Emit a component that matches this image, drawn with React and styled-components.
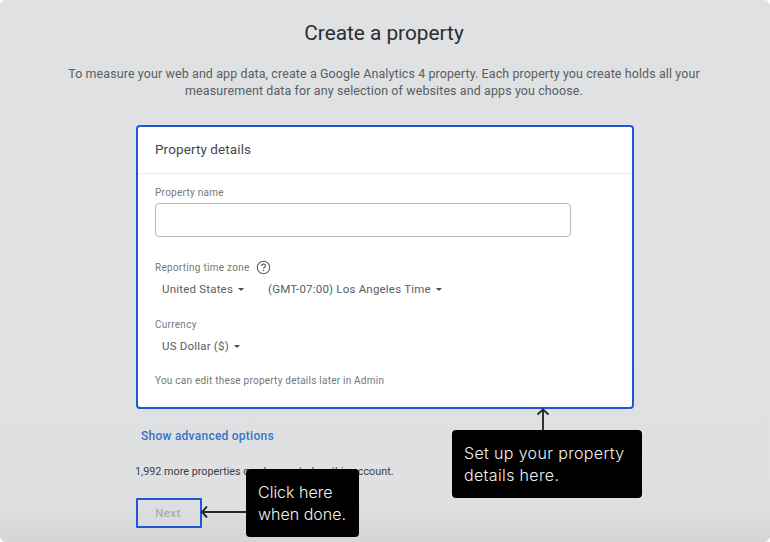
import React from "react";
import styled, { createGlobalStyle } from "styled-components";

const GlobalStyle = createGlobalStyle`
  html, body {
    margin: 0;
    padding: 0;
    background: #fff;
  }
  * {
    box-sizing: border-box;
  }
`;

const Page = styled.div`
  position: relative;
  width: 770px;
  height: 542px;
  overflow: hidden;
  border-radius: 6px;
  background: linear-gradient(to bottom, #dfe1e3 0, #dee0e2 500px, #d4d5d6 542px);
  font-family: Roboto, "Liberation Sans", sans-serif;
  padding-top: 20px;
  display: flex;
  flex-direction: column;
  align-items: center;
`;

const Title = styled.h1`
  margin: 1px 2px 0 0;
  font-size: 20.8px;
  line-height: 25px;
  font-weight: 400;
  color: #2b2d30;
`;

const Intro = styled.p`
  margin: 19px 2px 0 0;
  width: 650px;
  text-align: center;
  font-size: 12.45px;
  line-height: 17px;
  letter-spacing: 0.12px;
  color: #5a5d61;
`;

const Column = styled.div`
  width: 498px;
  margin-top: 26px;
`;

const Card = styled.section`
  height: 284px;
  background: #fff;
  border: 2px solid #2155d6;
  border-radius: 4px;
`;

const CardHeader = styled.div`
  height: 47px;
  padding: 0 17px 2px;
  display: flex;
  align-items: center;
  border-bottom: 1px solid #e8eaed;
  font-size: 13.5px;
  letter-spacing: 0.1px;
  color: #45484b;
`;

const CardBody = styled.div`
  padding: 11px 17px 0;
`;

const FieldLabel = styled.div`
  display: flex;
  align-items: center;
  gap: 6px;
  height: 14px;
  font-size: 10px;
  letter-spacing: 0.27px;
  color: #75787c;
`;

const TextBox = styled.div`
  width: 416px;
  height: 34px;
  margin-top: 4px;
  border: 1px solid #b4b6b9;
  border-radius: 4px;
`;

const SelectRow = styled.div`
  display: flex;
  align-items: center;
  gap: 24px;
  height: 18px;
  margin-top: 6px;
  padding-left: 7px;
`;

const SelectValue = styled.div`
  display: flex;
  align-items: center;
  gap: 5px;
  font-size: 11.5px;
  letter-spacing: 0.2px;
  color: #5a5d61;
`;

const Caret = styled.span`
  width: 0;
  height: 0;
  border-left: 3.5px solid transparent;
  border-right: 3.5px solid transparent;
  border-top: 3.5px solid #4a4d51;
`;

const Group = styled.div`
  margin-top: ${(p) => p.$top}px;
`;

const Hint = styled.div`
  margin-top: 19px;
  font-size: 10px;
  line-height: 14px;
  letter-spacing: 0.23px;
  color: #75787c;
`;

const AdvancedLink = styled.a`
  display: block;
  margin: 20px 0 0 5px;
  font-size: 12px;
  line-height: 15px;
  font-weight: 500;
  letter-spacing: 0.25px;
  color: #3a72c9;
`;

const QuotaNote = styled.div`
  margin: 21px 0 0 -1px;
  font-size: 10.8px;
  line-height: 14px;
  color: #3c4043;
`;

const NextButton = styled.button`
  display: block;
  width: 66px;
  height: 30px;
  margin-top: 19px;
  padding: 0 2px 0 0;
  background: transparent;
  border: 2px solid #2155d6;
  border-radius: 1px;
  font-family: inherit;
  font-size: 11.5px;
  font-weight: 500;
  letter-spacing: 0.4px;
  color: #acaeb0;
`;

const Callout = styled.div`
  position: absolute;
  left: ${(p) => p.$left}px;
  top: ${(p) => p.$top}px;
  width: ${(p) => p.$width}px;
  height: ${(p) => p.$height}px;
  padding: 12px 12px 0;
  background: #000;
  border-radius: 4px;
  font-family: Inter, "Noto Sans", sans-serif;
  font-size: 16px;
  font-weight: 300;
  line-height: 22px;
  letter-spacing: ${(p) => p.$tracking}px;
  white-space: nowrap;
  color: #f2f2f2;
`;

const ArrowArt = styled.svg`
  position: absolute;
  left: ${(p) => p.$left}px;
  top: ${(p) => p.$top}px;
`;

const HelpIcon = () => (
  <svg width="15" height="15" viewBox="0 0 14 14" fill="none" stroke="#5f6368">
    <circle cx="7" cy="7" r="5.8" strokeWidth="1.1" />
    <path d="M5.2 5.6c0-1 .8-1.7 1.8-1.7s1.8.7 1.8 1.6c0 1.2-1.8 1.3-1.8 2.7" strokeWidth="1.1" />
    <path d="M7 9.2v1.1" strokeWidth="1.1" />
  </svg>
);

const Select = ({ children }) => (
  <SelectValue>
    {children}
    <Caret />
  </SelectValue>
);

export default function App() {
  return (
    <Page>
      <GlobalStyle />
      <Title>Create a property</Title>
      <Intro>
        To measure your web and app data, create a Google Analytics 4 property. Each property you
        create holds all your measurement data for any selection of websites and apps you choose.
      </Intro>
      <Column>
        <Card>
          <CardHeader>Property details</CardHeader>
          <CardBody>
            <FieldLabel>Property name</FieldLabel>
            <TextBox />
            <Group $top={23}>
              <FieldLabel>
                Reporting time zone
                <HelpIcon />
              </FieldLabel>
              <SelectRow>
                <Select>United States</Select>
                <Select>(GMT-07:00) Los Angeles Time</Select>
              </SelectRow>
            </Group>
            <Group $top={19}>
              <FieldLabel>Currency</FieldLabel>
              <SelectRow>
                <Select>US Dollar ($)</Select>
              </SelectRow>
            </Group>
            <Hint>You can edit these property details later in Admin</Hint>
          </CardBody>
        </Card>
        <AdvancedLink>Show advanced options</AdvancedLink>
        <QuotaNote>1,992 more properties can be created on this account.</QuotaNote>
        <NextButton>Next</NextButton>
      </Column>

      <ArrowArt $left={535} $top={408} width="16" height="23" viewBox="0 0 16 23" fill="none" stroke="#2b2b2b" strokeWidth="1.9">
        <path d="M8 23V1.5M2.5 6.5 8 1.5l5.5 5" />
      </ArrowArt>
      <Callout $left={452} $top={430} $width={190} $height={68} $tracking={0.35}>
        Set up your property
        <br />
        details here.
      </Callout>

      <ArrowArt $left={200} $top={504} width="47" height="16" viewBox="0 0 47 16" fill="none" stroke="#2b2b2b" strokeWidth="1.9">
        <path d="M47 8H2M7 2.5 2 8l5 5.5" />
      </ArrowArt>
      <Callout $left={246} $top={469} $width={113} $height={68} $tracking={0}>
        Click here
        <br />
        when done.
      </Callout>
    </Page>
  );
}
